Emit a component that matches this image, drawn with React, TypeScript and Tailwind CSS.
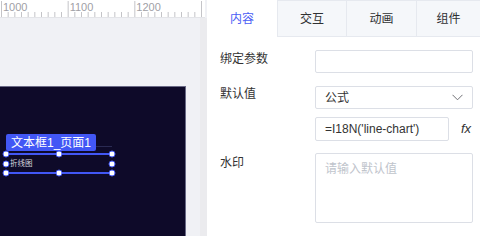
import React from 'react';

const tabs = [
  { name: '内容', w: 'w-[70px]' },
  { name: '交互', w: 'w-[69px]' },
  { name: '动画', w: 'w-[70px]' },
  { name: '组件', w: 'flex-1' },
];

const font = 'font-["Liberation_Sans","Noto_Sans_CJK_SC",sans-serif]';

function Ruler() {
  const ticks: { x: number; major: boolean }[] = [];
  for (let i = 0; i <= 31; i++) {
    ticks.push({ x: 1.5 + i * (200 / 30), major: i % 10 === 0 });
  }
  const labels = ['1000', '1100', '1200'];
  return (
    <div className="h-[18px] w-[205px] bg-white border-b border-[#e3e4e8] overflow-hidden shrink-0">
      <svg width="205" height="18" className="block">
        {ticks.map((t, i) => (
          <line
            key={i}
            x1={t.x}
            x2={t.x}
            y1={t.major ? 1 : 12}
            y2={18}
            stroke="#c4c4c8"
            strokeWidth="1"
          />
        ))}
        {labels.map((l, i) => (
          <text
            key={l}
            x={3 + i * (200 / 3)}
            y={11}
            fontSize="11"
            fill="#a0a0a6"
            fontFamily="Liberation Sans, sans-serif"
          >
            {l}
          </text>
        ))}
      </svg>
    </div>
  );
}

function Handle({ x, y }: { x: number; y: number }) {
  return (
    <div
      className="absolute w-[7px] h-[7px] rounded-full bg-white border-[1.5px] border-[#4257f5] -translate-x-1/2 -translate-y-1/2"
      style={{ left: x, top: y }}
    />
  );
}

function Canvas() {
  // 相对于深色画布左上角 (0, 86)
  const left = 6;
  const right = 112;
  const top = 67;
  const mid = 77;
  const bottom = 86;
  return (
    <div className="relative mt-[68px] w-[186px] flex-1 bg-[#0e0a29] border-t border-r border-[#6a6a86]">
      <div className="absolute left-[92px] top-[59px] w-[20px] h-px bg-[#2a2a52]" />
      <div className="absolute left-[6px] top-[47px] h-[17px] px-[5px] flex items-center rounded-[2px] bg-[#4257f5] text-white text-[12px] leading-none">
        文本框1_页面1
      </div>
      <div className="absolute left-[6px] top-[66px] w-[106px] h-[1.5px] bg-[#4257f5]" />
      <div className="absolute left-[6px] top-[85px] w-[106px] h-[1.5px] bg-[#4257f5]" />
      <div className="absolute left-[10px] top-[72px] text-[7.5px] leading-[10px] text-[#d4d4dc]">折线图</div>
      <Handle x={left} y={top} />
      <Handle x={59} y={top} />
      <Handle x={right} y={top} />
      <Handle x={left} y={mid} />
      <Handle x={right} y={mid} />
      <Handle x={left} y={bottom} />
      <Handle x={59} y={bottom} />
      <Handle x={right} y={bottom} />
    </div>
  );
}

export default function App() {
  return (
    <div className={`w-[480px] h-[236px] flex overflow-hidden bg-white ${font}`}>
      {/* 画布区域 */}
      <div className="w-[207px] shrink-0 h-full flex flex-col bg-[#f0f1f5]">
        <Ruler />
        <div className="flex flex-1 min-h-0">
          <div className="flex-1 flex flex-col">
            <Canvas />
          </div>
          <div className="w-[7px] bg-[#ebebee]" />
        </div>
      </div>

      {/* 属性面板 */}
      <div className="flex-1 flex flex-col bg-white">
        <div className="h-[37px] flex shrink-0">
          {tabs.map((t, i) => (
            <div
              key={t.name}
              className={`${t.w} shrink-0 flex items-center justify-center text-[12px] ${
                i === 0
                  ? 'bg-white text-[#4a5df5]'
                  : 'bg-[#f5f7fa] text-[#303133] border-l border-b border-t border-[#e6e9ef]'
              }`}
            >
              {t.name}
            </div>
          ))}
        </div>

        <div className="flex flex-col pl-[13px] pr-[7px] pt-[13px] text-[12px] text-[#333]">
          <div className="flex">
            <div className="w-[95px] shrink-0 leading-[16px] pt-[1px]">绑定参数</div>
            <div className="flex-1 h-[23px] border border-[#dcdfe6] rounded-[2px]" />
          </div>

          <div className="flex mt-[13px]">
            <div className="w-[95px] shrink-0 leading-[16px]">默认值</div>
            <div className="flex-1 flex flex-col">
              <div className="h-[23px] border border-[#dcdfe6] rounded-[2px] flex items-center justify-between pl-[9px] pr-[9px]">
                <span>公式</span>
                <svg width="11" height="7" viewBox="0 0 11 7" fill="none">
                  <polyline points="0.5,0.8 5.5,5.8 10.5,0.8" stroke="#707075" strokeWidth="1" />
                </svg>
              </div>
              <div className="flex items-center mt-[8px]">
                <div className="w-[134px] h-[24px] border border-[#dcdfe6] rounded-[2px] flex items-center pl-[9px]">
                  =I18N('line-chart')
                </div>
                <span className="ml-[12px] italic text-[13px] text-[#333]">fx</span>
              </div>
            </div>
          </div>

          <div className="flex mt-[12px]">
            <div className="w-[95px] shrink-0 leading-[16px] pt-[2px]">水印</div>
            <div className="flex-1 h-[70px] border border-[#dcdfe6] rounded-[2px] px-[9px] pt-[7px] text-[#c0c4cc] leading-[16px]">
              请输入默认值
            </div>
          </div>
        </div>
      </div>
    </div>
  );
}
